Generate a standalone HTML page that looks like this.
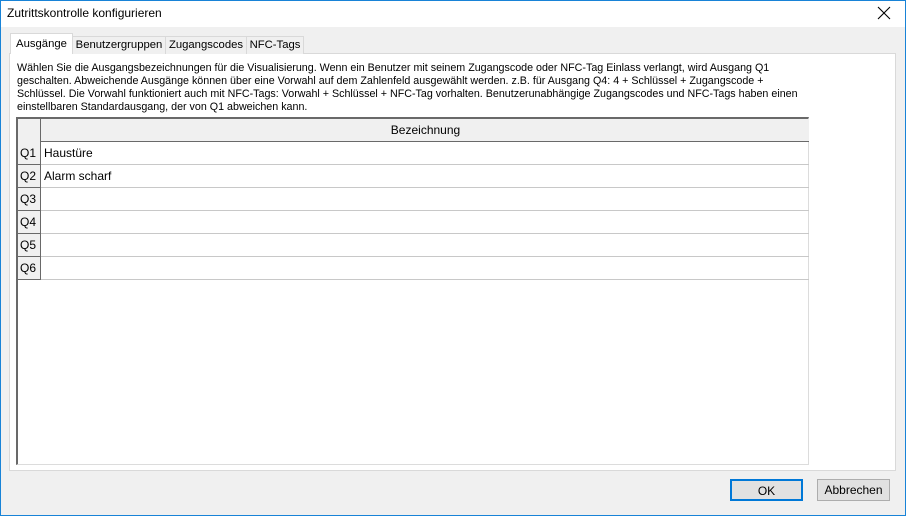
<!DOCTYPE html>
<html><head><meta charset="utf-8"><style>
*{margin:0;padding:0;box-sizing:border-box}
body{width:906px;height:517px;background:#fff;font-family:"Liberation Sans",sans-serif;font-size:12px;color:#000;position:relative;overflow:hidden}
.win{position:absolute;left:0;top:0;width:906px;height:516px;border:1px solid #1883d7;background:#f0f0f0}
.title{position:absolute;left:0;top:0;width:904px;height:26px;background:#fff}
.title span{position:absolute;left:6px;top:5px;font-size:12px}
.x{position:absolute;left:876px;top:5px;width:14px;height:14px}
.tab{position:absolute;top:35px;height:18px;border:1px solid #d9d9d9;border-bottom:none;background:#f0f0f0;font-size:11.3px;text-align:center;line-height:16px}
.panel{position:absolute;left:8px;top:52px;width:887px;height:418px;background:#fff;border:1px solid #d9d9d9}
p{position:absolute;left:16px;top:61px;line-height:13px;font-size:11px;white-space:nowrap;transform:scaleX(0.973);transform-origin:0 0}
.grid{position:absolute;left:15px;top:116px;width:793px;height:348px;border:1px solid #dcdcdc;border-left:2px solid #696969;border-top:2px solid #696969;background:#fff}
.row{position:absolute;left:0;width:791px;height:23px;border-bottom:1px solid #c8c8c8}
.rh{position:absolute;left:0;top:0;width:23px;height:23px;background:#f0f0f0;border-right:1px solid #696969;border-bottom:1px solid #696969;padding-left:2px;line-height:22px}
.c{position:absolute;left:26px;top:0;line-height:22px}
.btn{position:absolute;top:478px;width:73px;height:22px;background:#e1e1e1;border:1px solid #adadad;text-align:center;line-height:20px}
</style></head><body>
<div class="win">
<div class="title"><span>Zutrittskontrolle konfigurieren</span>
<svg class="x" viewBox="0 0 14 14"><path d="M1 1L13 13M13 1L1 13" stroke="#000" stroke-width="1.1"/></svg></div>
<div class="panel"></div>
<div class="tab" style="left:9px;top:32px;width:63px;height:21px;background:#fff;line-height:20px">Ausgänge</div>
<div class="tab" style="left:71px;width:94px">Benutzergruppen</div>
<div class="tab" style="left:164px;width:82px">Zugangscodes</div>
<div class="tab" style="left:245px;width:58px">NFC-Tags</div>
<p>Wählen Sie die Ausgangsbezeichnungen für die Visualisierung. Wenn ein Benutzer mit seinem Zugangscode oder NFC-Tag Einlass verlangt, wird Ausgang Q1<br>geschalten. Abweichende Ausgänge können über eine Vorwahl auf dem Zahlenfeld ausgewählt werden. z.B. für Ausgang Q4: 4 + Schlüssel + Zugangscode +<br>Schlüssel. Die Vorwahl funktioniert auch mit NFC-Tags: Vorwahl + Schlüssel + NFC-Tag vorhalten. Benutzerunabhängige Zugangscodes und NFC-Tags haben einen<br>einstellbaren Standardausgang, der von Q1 abweichen kann.</p>
<div class="grid">
<div class="row" style="top:0;background:#f0f0f0;border-bottom:1px solid #696969"><div class="rh" style="border-bottom:none"></div><div class="c" style="left:24px;width:767px;text-align:center">Bezeichnung</div></div>
<div class="row" style="top:23px"><div class="rh">Q1</div><div class="c">Haustüre</div></div>
<div class="row" style="top:46px"><div class="rh">Q2</div><div class="c">Alarm scharf</div></div>
<div class="row" style="top:69px"><div class="rh">Q3</div></div>
<div class="row" style="top:92px"><div class="rh">Q4</div></div>
<div class="row" style="top:115px"><div class="rh">Q5</div></div>
<div class="row" style="top:138px"><div class="rh">Q6</div></div>
</div>
<div class="btn" style="left:729px;border:2px solid #0078d7">OK</div>
<div class="btn" style="left:816px">Abbrechen</div>
</div>
</body></html>
